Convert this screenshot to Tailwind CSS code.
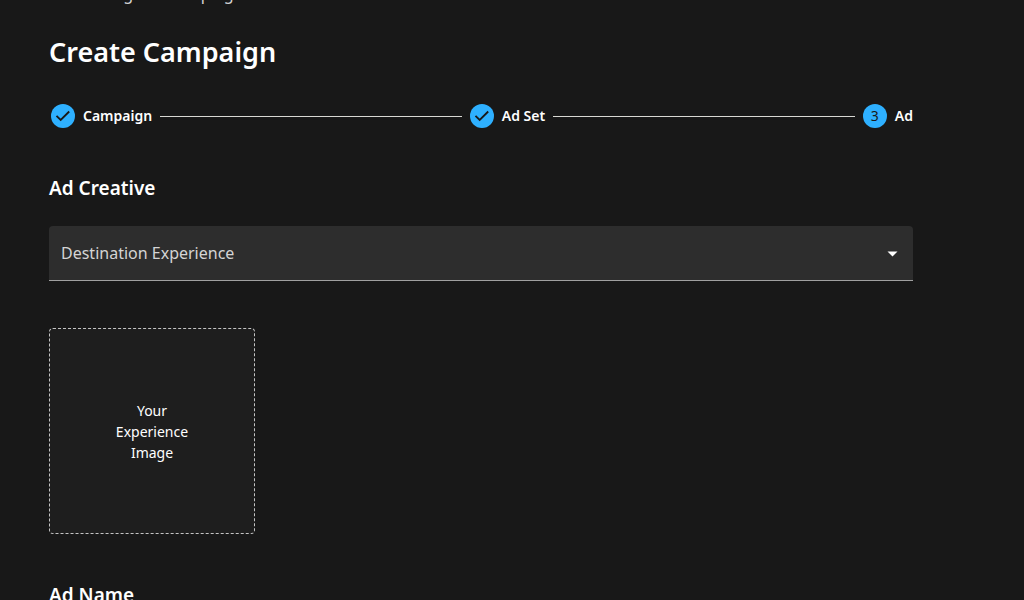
<!DOCTYPE html>
<html lang="en">
<head>
<meta charset="utf-8">
<meta name="viewport" content="width=device-width, initial-scale=1">
<title>Create Campaign</title>
<script src="https://cdn.jsdelivr.net/npm/@tailwindcss/browser@4"></script>
</head>
<body class="h-screen overflow-hidden bg-[#181818] font-['Noto_Sans','Open_Sans',sans-serif] text-white">
<main class="mr-16 max-w-[913px] pl-[49px]">
  <nav aria-label="Breadcrumb" class="-mt-4 flex h-5 gap-1.5 text-base leading-5 text-[#d4d4d4]">
    <a href="#">Ads Manager</a><span>/</span><a href="#">Campaign</a>
  </nav>
  <h1 class="mt-7 text-[27px] leading-10 font-semibold">Create Campaign</h1>

  <ol class="mt-8 flex items-center gap-2 pl-0.5 text-sm leading-6 font-semibold">
    <li class="flex items-center gap-2">
      <svg class="size-6" viewBox="0 0 24 24" aria-hidden="true"><circle cx="12" cy="12" r="12" fill="#2eb0ff"/><path d="M5.500 11.800l4.200 4.200 8.500-8.500" fill="none" stroke="#181818" stroke-width="1.800"/></svg>
      <span>Campaign</span>
    </li>
    <li role="presentation" class="h-px flex-1 bg-[#d8d8d3]"></li>
    <li class="flex items-center gap-2">
      <svg class="size-6" viewBox="0 0 24 24" aria-hidden="true"><circle cx="12" cy="12" r="12" fill="#2eb0ff"/><path d="M5.500 11.800l4.200 4.200 8.500-8.500" fill="none" stroke="#181818" stroke-width="1.800"/></svg>
      <span>Ad Set</span>
    </li>
    <li role="presentation" class="h-px flex-1 bg-[#d8d8d3]"></li>
    <li class="flex items-center gap-2" aria-current="step">
      <span class="size-6 rounded-full bg-[#2eb0ff] text-center font-normal text-[#181818]">3</span>
      <span>Ad</span>
    </li>
  </ol>

  <h2 class="mt-11 text-[19px] leading-8 font-semibold">Ad Creative</h2>
  <div class="relative mt-[22px]">
    <select aria-label="Destination Experience" class="block h-[55px] w-full appearance-none rounded-t border-b border-[#a0a0a0] bg-[#2d2d2d] px-3 text-base text-[#d4d4d4]">
      <option>Destination Experience</option>
    </select>
    <svg class="pointer-events-none absolute top-4 right-2 size-6" viewBox="0 0 24 24" fill="#fff" aria-hidden="true"><path d="M6.500 9.500h10l-5 5z"/></svg>
  </div>

  <button type="button" class="mt-[47px] flex size-[206px] items-center justify-center rounded border border-dashed border-[#c4c4c4] bg-[#1e1e1e] text-sm leading-[21px]">
    <span class="w-20">Your Experience Image</span>
  </button>

  <h2 class="mt-[45px] text-[19px] leading-8 font-semibold">Ad Name</h2>
</main>
</body>
</html>
